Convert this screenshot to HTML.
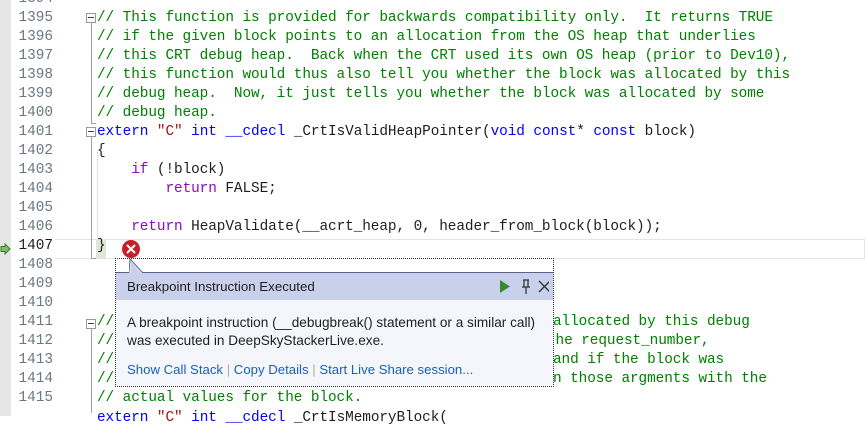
<!DOCTYPE html>
<html><head><meta charset="utf-8"><style>
body{margin:0;width:865px;height:416px;overflow:hidden;background:#fff;position:relative;font-family:"Liberation Mono",monospace;}
.gut{position:absolute;left:0;top:0;width:11px;height:416px;background:#e6e6e6;}
.ln{position:absolute;left:14px;width:39px;text-align:right;font-size:14.4px;color:#6e7681;line-height:19px;}
.cd{position:absolute;left:97px;font-size:14.4px;letter-spacing:-0.08px;line-height:19px;white-space:pre;color:#1e1e1e;}
.c{color:#008000}.k{color:#0000ff}.r{color:#8f08c4}.s{color:#a31515}
.fold{position:absolute;left:86px;width:8px;height:8px;border:1px solid #999;background:#fff;}
.fold:after{content:"";position:absolute;left:1px;top:3px;width:6px;height:1px;background:#444;}
.vl{position:absolute;left:91px;width:1px;background:#a0a0a0;}
</style></head><body>
<div class="gut"></div>
<div style="position:absolute;left:55px;right:0;top:239px;height:18px;border:1px solid #e4e4e4;border-left:none;"></div>
<svg style="position:absolute;left:0;top:243px" width="11" height="12"><path d="M1 3.5h4V1l5 5-5 5V8.5H1z" fill="#7fbf6a" stroke="#3c7a2c" stroke-width="1"/></svg>
<div class="fold" style="top:13px"></div><div class="vl" style="top:23px;height:100px"></div><div style="position:absolute;left:91px;top:123px;width:5px;height:1px;background:#a0a0a0"></div>
<div class="fold" style="top:127px"></div><div class="vl" style="top:137px;height:121px"></div><div style="position:absolute;left:91px;top:258px;width:5px;height:1px;background:#a0a0a0"></div>
<div class="fold" style="top:319px"></div><div class="vl" style="top:329px;height:84px"></div>
<div style="position:absolute;left:97px;top:152px;width:1px;height:86px;border-left:1px dotted #ccc"></div>
<div style="position:absolute;left:96px;top:240px;width:10px;height:18px;background:#e2e6d6"></div>

<div class="ln" style="top:-10px">1394</div>
<div class="ln" style="top:9px">1395</div><div class="cd c" style="top:9px">// This function is provided for backwards compatibility only.  It returns TRUE</div>
<div class="ln" style="top:28px">1396</div><div class="cd c" style="top:28px">// if the given block points to an allocation from the OS heap that underlies</div>
<div class="ln" style="top:47px">1397</div><div class="cd c" style="top:47px">// this CRT debug heap.  Back when the CRT used its own OS heap (prior to Dev10),</div>
<div class="ln" style="top:66px">1398</div><div class="cd c" style="top:66px">// this function would thus also tell you whether the block was allocated by this</div>
<div class="ln" style="top:85px">1399</div><div class="cd c" style="top:85px">// debug heap.  Now, it just tells you whether the block was allocated by some</div>
<div class="ln" style="top:104px">1400</div><div class="cd c" style="top:104px">// debug heap.</div>
<div class="ln" style="top:123px">1401</div><div class="cd" style="top:123px"><span class="k">extern</span> <span class="s">"C"</span> <span class="k">int</span> <span class="k">__cdecl</span> _CrtIsValidHeapPointer(<span class="k">void</span> <span class="k">const</span>* <span class="k">const</span> block)</div>
<div class="ln" style="top:142px">1402</div><div class="cd" style="top:142px">{</div>
<div class="ln" style="top:161px">1403</div><div class="cd" style="top:161px">    <span class="r">if</span> (!block)</div>
<div class="ln" style="top:180px">1404</div><div class="cd" style="top:180px">        <span class="r">return</span> FALSE;</div>
<div class="ln" style="top:199px">1405</div>
<div class="ln" style="top:218px">1406</div><div class="cd" style="top:218px">    <span class="r">return</span> HeapValidate(__acrt_heap, 0, header_from_block(block));</div>
<div class="ln" style="top:237px;color:#1e1e1e">1407</div><div class="cd" style="top:237px">}</div>
<div class="ln" style="top:256px">1408</div>
<div class="ln" style="top:275px">1409</div>
<div class="ln" style="top:294px">1410</div>
<div class="ln" style="top:313px">1411</div><div class="cd c" style="top:313px">//</div><div class="cd c" style="top:313px;left:553px">allocated by this debug</div>
<div class="ln" style="top:332px">1412</div><div class="cd c" style="top:332px">//</div><div class="cd c" style="top:332px;left:547px">the request_number,</div>
<div class="ln" style="top:351px">1413</div><div class="cd c" style="top:351px">//</div><div class="cd c" style="top:351px;left:553px">and if the block was</div>
<div class="ln" style="top:370px">1414</div><div class="cd c" style="top:370px">//</div><div class="cd c" style="top:370px;left:553px">n those argments with the</div>
<div class="ln" style="top:389px">1415</div><div class="cd c" style="top:389px">// actual values for the block.</div>
<div class="cd" style="top:409px"><span class="k">extern</span> <span class="s">"C"</span> <span class="k">int</span> <span class="k">__cdecl</span> _CrtIsMemoryBlock(</div>

<!-- popup -->
<div style="position:absolute;left:115px;top:258px;width:437px;height:127px;border:1px dotted #333;background:#f5f6fc;font-family:'Liberation Sans',sans-serif;">
  <div style="position:absolute;left:0;top:0;width:437px;height:13px;background:#fff"></div>
  <div style="position:absolute;left:0;top:13px;width:437px;height:27px;background:#c9d0ec;border-top:1px solid #5a6390;"></div>
  <svg style="position:absolute;left:13px;top:0" width="20" height="15"><path d="M0 14 L1 0 L14 14" fill="#fff" stroke="#5a6390" stroke-width="1"/><path d="M1.5 14.5 L1.5 2 L13 14.5z" fill="#c9d0ec"/></svg>
  <div style="position:absolute;left:11px;top:20px;font-size:13.3px;color:#1e1e1e">Breakpoint Instruction Executed</div>
  <svg style="position:absolute;left:381px;top:20px" width="52" height="16"><path d="M3 1 L13 7.5 L3 14z" fill="#388a34"/><path d="M26 1h6M27 1v7h4V1M25 8h8M29 8v7" fill="none" stroke="#333" stroke-width="1.3"/><path d="M42 2l11 11M53 2L42 13" stroke="#333" stroke-width="1.4"/></svg>
  <div style="position:absolute;left:11px;top:55px;font-size:13.6px;color:#1e1e1e;line-height:18px;white-space:nowrap">A breakpoint instruction (__debugbreak() statement or a similar call)<br>was executed in DeepSkyStackerLive.exe.</div>
  <div style="position:absolute;left:11px;top:103px;font-size:13.2px;color:#1a5fb4;white-space:nowrap">Show Call Stack <span style="color:#aaa">|</span> Copy Details <span style="color:#aaa">|</span> Start Live Share session...</div>
</div>
<svg style="position:absolute;left:121px;top:239px" width="20" height="20"><circle cx="10" cy="10" r="9" fill="#c4202c"/><path d="M6 6l8 8M14 6l-8 8" stroke="#fff" stroke-width="2"/></svg>
</body></html>
